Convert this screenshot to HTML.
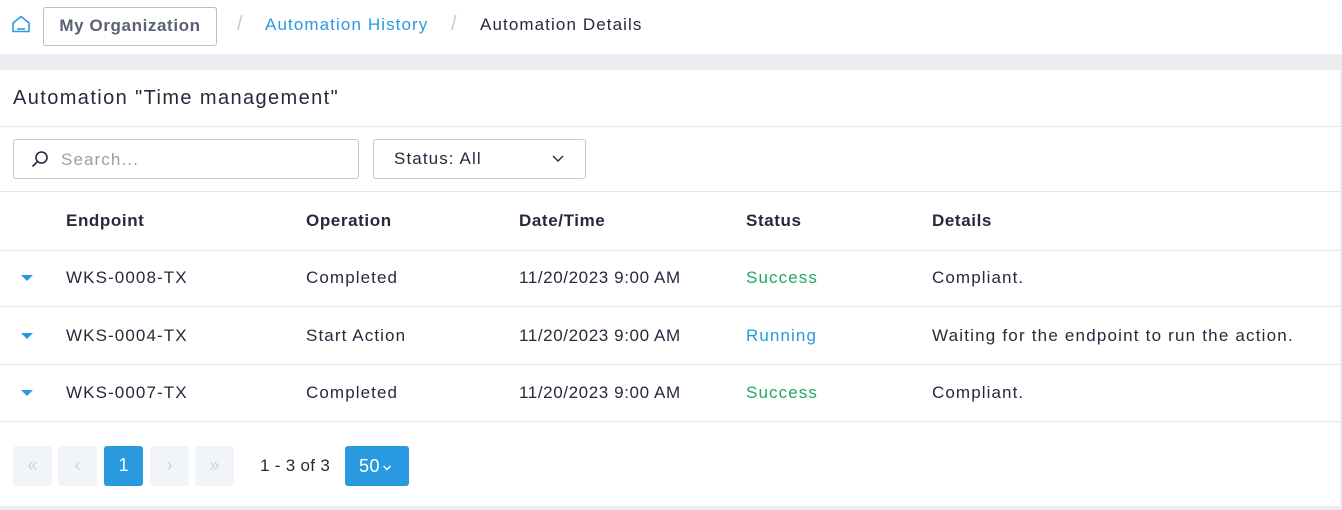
<!DOCTYPE html><html><head><style>
*{margin:0;padding:0;box-sizing:border-box}
body{width:1342px;height:510px;background:#fff;font-family:"Liberation Sans",sans-serif;color:#252a3d;position:relative;overflow:hidden;letter-spacing:1.1px}
.a{position:absolute;white-space:nowrap}
.t{font-size:17px;top:0}
.hl{position:absolute;left:0;width:1342px;height:1px;background:#e6e9ee}
.pb{position:absolute;top:446px;width:39px;height:40px;border-radius:3px;background:#f1f5f9;color:#c5d3e0;font-size:18px;text-align:center;line-height:38px;letter-spacing:0}
</style></head><body>
<svg class="a" style="left:11px;top:14px" width="20" height="20" viewBox="0 0 20 20"><path d="M2 9 L10 2.5 L18 9 V17.5 H2 Z" fill="none" stroke="#2a9ae0" stroke-width="1.6"/><path d="M6 15 H14" stroke="#2a9ae0" stroke-width="1.6"/></svg>
<div class="a" style="left:43px;top:7px;width:174px;height:39px;border:1px solid #b9bec9;border-radius:3px;font-size:17px;font-weight:bold;color:#5a6075;text-align:center;line-height:36px;letter-spacing:0.6px">My Organization</div>
<div class="a" style="left:237px;top:13px;font-size:20px;color:#c8cbd2">/</div>
<div class="a" style="left:265px;top:15px;font-size:17px;color:#2a9ae0">Automation History</div>
<div class="a" style="left:451px;top:13px;font-size:20px;color:#c8cbd2">/</div>
<div class="a" style="left:480px;top:15px;font-size:17px;color:#252a3d">Automation Details</div>
<div class="a" style="left:0;top:54px;width:1342px;height:16px;background:#e9edf1"></div>
<div class="a" style="left:13px;top:87px;font-size:20px;letter-spacing:1.4px">Automation "Time management"</div>
<div class="hl" style="top:126px"></div>
<div class="a" style="left:13px;top:139px;width:346px;height:40px;border:1px solid #c4c8d0;border-radius:3px"></div>
<svg class="a" style="left:30px;top:149px" width="20" height="20" viewBox="0 0 20 20"><circle cx="11.5" cy="8.5" r="5.5" fill="none" stroke="#252a3d" stroke-width="1.6"/><path d="M7.5 12.5 L2.5 17.5" stroke="#252a3d" stroke-width="1.6"/></svg>
<div class="a" style="left:61px;top:150px;font-size:17px;color:#9a9eaa">Search...</div>
<div class="a" style="left:373px;top:139px;width:213px;height:40px;border:1px solid #c4c8d0;border-radius:3px"></div>
<div class="a" style="left:394px;top:149px;font-size:17px">Status: All</div>
<svg class="a" style="left:551px;top:154px" width="14" height="10" viewBox="0 0 14 10"><path d="M2 2 L7 7 L12 2" fill="none" stroke="#252a3d" stroke-width="1.4"/></svg>
<div class="hl" style="top:191px"></div>
<div class="a" style="left:66px;top:211px;font-size:17px;font-weight:bold;letter-spacing:0.6px">Endpoint</div>
<div class="a" style="left:306px;top:211px;font-size:17px;font-weight:bold;letter-spacing:0.6px">Operation</div>
<div class="a" style="left:519px;top:211px;font-size:17px;font-weight:bold;letter-spacing:0.6px">Date/Time</div>
<div class="a" style="left:746px;top:211px;font-size:17px;font-weight:bold;letter-spacing:0.6px">Status</div>
<div class="a" style="left:932px;top:211px;font-size:17px;font-weight:bold;letter-spacing:0.6px">Details</div>
<div class="hl" style="top:250px"></div>
<div class="a" style="left:21px;top:275px;width:0;height:0;border-left:6px solid transparent;border-right:6px solid transparent;border-top:6px solid #2a9ae0"></div>
<div class="a" style="left:66px;top:268px;font-size:17px">WKS-0008-TX</div>
<div class="a" style="left:306px;top:268px;font-size:17px">Completed</div>
<div class="a" style="left:519px;top:268px;font-size:17px;letter-spacing:0.6px">11/20/2023 9:00 AM</div>
<div class="a" style="left:746px;top:268px;font-size:17px;color:#22a861">Success</div>
<div class="a" style="left:932px;top:268px;font-size:17px">Compliant.</div>
<div class="hl" style="top:306px"></div>
<div class="a" style="left:21px;top:333px;width:0;height:0;border-left:6px solid transparent;border-right:6px solid transparent;border-top:6px solid #2a9ae0"></div>
<div class="a" style="left:66px;top:326px;font-size:17px">WKS-0004-TX</div>
<div class="a" style="left:306px;top:326px;font-size:17px">Start Action</div>
<div class="a" style="left:519px;top:326px;font-size:17px;letter-spacing:0.6px">11/20/2023 9:00 AM</div>
<div class="a" style="left:746px;top:326px;font-size:17px;color:#2a9ae0">Running</div>
<div class="a" style="left:932px;top:326px;font-size:17px;letter-spacing:1.2px">Waiting for the endpoint to run the action.</div>
<div class="hl" style="top:364px"></div>
<div class="a" style="left:21px;top:390px;width:0;height:0;border-left:6px solid transparent;border-right:6px solid transparent;border-top:6px solid #2a9ae0"></div>
<div class="a" style="left:66px;top:383px;font-size:17px">WKS-0007-TX</div>
<div class="a" style="left:306px;top:383px;font-size:17px">Completed</div>
<div class="a" style="left:519px;top:383px;font-size:17px;letter-spacing:0.6px">11/20/2023 9:00 AM</div>
<div class="a" style="left:746px;top:383px;font-size:17px;color:#22a861">Success</div>
<div class="a" style="left:932px;top:383px;font-size:17px">Compliant.</div>
<div class="hl" style="top:421px"></div>
<div class="pb" style="left:13px">«</div>
<div class="pb" style="left:58px">‹</div>
<div class="pb" style="left:104px;background:#2a9ae0;color:#fff">1</div>
<div class="pb" style="left:150px">›</div>
<div class="pb" style="left:195px">»</div>
<div class="a" style="left:260px;top:456px;font-size:17px;letter-spacing:0.3px">1 - 3 of 3</div>
<div class="a" style="left:345px;top:446px;width:64px;height:40px;border-radius:3px;background:#2a9ae0;color:#fff;font-size:18px;line-height:40px;padding-left:14px;letter-spacing:0.5px">50<svg style="margin-left:2px" width="10" height="8" viewBox="0 0 10 8"><path d="M1.5 2 L5 5.5 L8.5 2" fill="none" stroke="#fff" stroke-width="1.4"/></svg></div>
<div class="a" style="left:0;top:506px;width:1342px;height:4px;background:#e9edf1"></div>
<div class="a" style="left:1340px;top:70px;width:2px;height:440px;background:#e9edf1"></div>
</body></html>
